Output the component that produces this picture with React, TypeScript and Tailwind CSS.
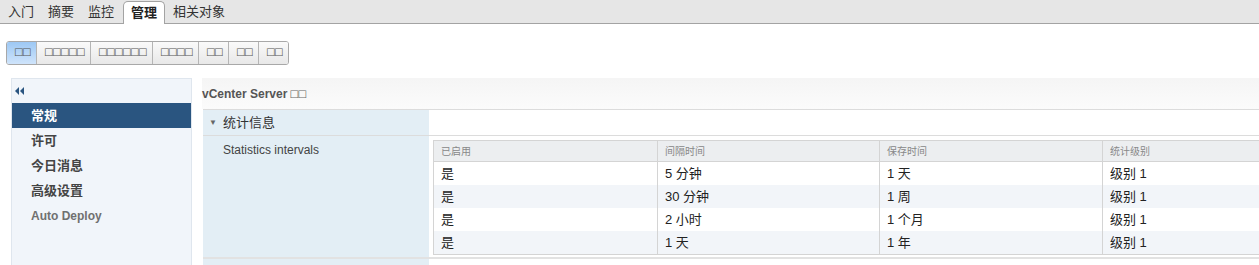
import React from 'react'

const tabs = ['入门', '摘要', '监控', '管理', '相关对象']
const buttons = [2, 5, 6, 4, 2, 2, 2]
const sideItems = ['许可', '今日消息', '高级设置']

const rows = [
  ['是', '5 分钟', '1 天', '级别 1'],
  ['是', '30 分钟', '1 周', '级别 1'],
  ['是', '2 小时', '1 个月', '级别 1'],
  ['是', '1 天', '1 年', '级别 1'],
]
const headers = ['已启用', '间隔时间', '保存时间', '统计级别']
const colW = ['w-[223px]', 'w-[222px]', 'w-[223px]', 'w-[200px]']

// missing-glyph boxes, as the original page shows them
const Tofu = ({ n }: { n: number }) => (
  <span className="inline-flex font-['DejaVu_Sans'] text-[10px] leading-none -translate-y-[1px]">
    {Array.from({ length: n }).map((_, i) => (
      <span key={i} className="inline-block w-[8px] text-center">□</span>
    ))}
  </span>
)

const IconCollapse = () => (
  <svg width="9" height="8" viewBox="0 0 9 8" fill="#2a5580">
    <polygon points="4,0 4,8 0,4" />
    <polygon points="9,0 9,8 5,4" />
  </svg>
)

export default function App() {
  return (
    <div className="w-[1259px] h-[265px] overflow-hidden bg-white font-['Liberation_Sans','Noto_Sans_CJK_SC',sans-serif] text-[#333]">
      {/* top tabs */}
      <div className="h-[24px] bg-[#e6e6e6] border-b border-[#a3a3a3] flex items-end pl-[1px]">
        {tabs.map(t =>
          t === '管理' ? (
            <div
              key={t}
              className="h-[23px] mb-[-1px] ml-[2px] mr-[1px] px-[7px] bg-white border border-b-0 border-[#a3a3a3] rounded-t-[5px] flex items-center text-[13px] font-bold text-[#222]"
            >
              {t}
            </div>
          ) : (
            <div key={t} className="h-[23px] px-[7px] flex items-center text-[13px] text-[#333]">
              {t}
            </div>
          )
        )}
      </div>

      {/* button bar */}
      <div className="pl-[6px] pt-[15px] h-[54px]">
        <div className="inline-flex h-[24px] border border-[#a8a8a8] rounded-[3px] overflow-hidden">
          {buttons.map((n, i) => (
            <div
              key={i}
              className={`flex items-center pl-[7px] pr-[6px] text-[#555] ${i > 0 ? 'border-l border-[#b5b5b5]' : ''} ${
                i === 0 ? 'bg-gradient-to-b from-[#9dc8f4] to-[#cfe4fb]' : 'bg-gradient-to-b from-[#fafafa] to-[#e8e8e8]'
              }`}
            >
              <Tofu n={n} />
            </div>
          ))}
        </div>
      </div>

      <div className="flex pl-[11px]">
        {/* sidebar */}
        <div className="w-[181px] h-[190px] bg-[#f1f5fa] border border-[#dfe6ee] border-b-0 shrink-0">
          <div className="h-[24px] flex items-center pl-[3px]">
            <IconCollapse />
          </div>
          <div className="h-[25px] bg-[#2a5580] text-white font-bold text-[13px] flex items-center pl-[19px]">常规</div>
          {sideItems.map(s => (
            <div key={s} className="h-[25px] flex items-center pl-[19px] text-[13px] font-bold text-[#444]">
              {s}
            </div>
          ))}
          <div className="h-[25px] flex items-center pl-[19px] text-[12px] font-bold text-[#707070]">Auto Deploy</div>
        </div>

        {/* main */}
        <div className="ml-[11px] flex-1 min-w-0">
          <div className="h-[31px] bg-gradient-to-b from-[#f5f5f5] to-[#fbfbfb] flex items-center text-[12px] font-bold text-[#555] -ml-[1px] gap-[2px]">
            vCenter Server <span className="font-normal text-[#666]"><Tofu n={2} /></span>
          </div>
          <div className="border-t border-[#dcdcdc]">
            <div className="flex h-[26px] border-b border-[#dcdcdc]">
              <div className="w-[226px] bg-[#e3eef5] flex items-center pl-[6px] text-[13px] text-[#333]">
                <span className="text-[8px] text-[#666] mr-[6px]">▼</span>统计信息
              </div>
              <div className="flex-1 bg-white" />
            </div>
            <div className="flex border-b-2 border-[#e2e2e2]">
              <div className="w-[226px] bg-[#e3eef5] pl-[20px] pt-[5px] text-[12px] text-[#444]">Statistics intervals</div>
              <div className="flex-1 pl-[4px] pt-[4px] pb-[2px] bg-white overflow-hidden">
                <div className="w-[900px] border border-[#d4d4d4]">
                  <div className="flex h-[21px] bg-[#eceef0] border-b border-[#d4d4d4]">
                    {headers.map((h, i) => (
                      <div
                        key={h}
                        className={`${colW[i]} shrink-0 flex items-center pl-[7px] text-[10px] text-[#888] ${i > 0 ? 'border-l border-[#d4d4d4]' : ''}`}
                      >
                        {h}
                      </div>
                    ))}
                  </div>
                  {rows.map((r, ri) => (
                    <div key={ri} className={`flex h-[23px] ${ri % 2 ? 'bg-[#f2f5f9]' : 'bg-white'}`}>
                      {r.map((c, i) => (
                        <div
                          key={i}
                          className={`${colW[i]} shrink-0 flex items-center pl-[7px] text-[13px] text-[#222] ${i > 0 ? 'border-l border-[#d4d4d4]' : ''}`}
                        >
                          {c}
                        </div>
                      ))}
                    </div>
                  ))}
                </div>
              </div>
            </div>
            <div className="flex h-[10px]">
              <div className="w-[226px] bg-[#e3eef5]" />
              <div className="flex-1 bg-white" />
            </div>
          </div>
        </div>
      </div>
    </div>
  )
}
